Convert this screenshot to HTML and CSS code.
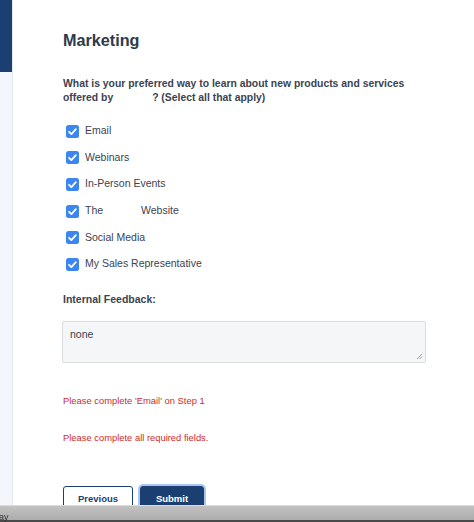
FILE: index.html
```html
<!DOCTYPE html>
<html>
<head>
<meta charset="utf-8">
<link rel="stylesheet" href="styles.css">
</head>
<body>
<div class="page">
  <aside class="sidebar">
    <div class="sidebar-top"></div>
    <div class="sidebar-rest"></div>
  </aside>
  <main class="main">
    <h1 class="title">Marketing</h1>
    <p class="question">What is your preferred way to learn about new products and services<br>offered by <span class="blank"></span>? (Select all that apply)</p>
    <ul class="options">
      <li class="option"><span class="check"><svg viewBox="0 0 14 14" width="13" height="13"><path d="M3.3 7.3 L5.8 9.8 L10.6 4.4" fill="none" stroke="#fff" stroke-width="1.9" stroke-linecap="round" stroke-linejoin="round"/></svg></span><span>Email</span></li>
      <li class="option"><span class="check"><svg viewBox="0 0 14 14" width="13" height="13"><path d="M3.3 7.3 L5.8 9.8 L10.6 4.4" fill="none" stroke="#fff" stroke-width="1.9" stroke-linecap="round" stroke-linejoin="round"/></svg></span><span>Webinars</span></li>
      <li class="option"><span class="check"><svg viewBox="0 0 14 14" width="13" height="13"><path d="M3.3 7.3 L5.8 9.8 L10.6 4.4" fill="none" stroke="#fff" stroke-width="1.9" stroke-linecap="round" stroke-linejoin="round"/></svg></span><span>In-Person Events</span></li>
      <li class="option"><span class="check"><svg viewBox="0 0 14 14" width="13" height="13"><path d="M3.3 7.3 L5.8 9.8 L10.6 4.4" fill="none" stroke="#fff" stroke-width="1.9" stroke-linecap="round" stroke-linejoin="round"/></svg></span><span>The <span class="blank wide"></span>Website</span></li>
      <li class="option"><span class="check"><svg viewBox="0 0 14 14" width="13" height="13"><path d="M3.3 7.3 L5.8 9.8 L10.6 4.4" fill="none" stroke="#fff" stroke-width="1.9" stroke-linecap="round" stroke-linejoin="round"/></svg></span><span>Social Media</span></li>
      <li class="option"><span class="check"><svg viewBox="0 0 14 14" width="13" height="13"><path d="M3.3 7.3 L5.8 9.8 L10.6 4.4" fill="none" stroke="#fff" stroke-width="1.9" stroke-linecap="round" stroke-linejoin="round"/></svg></span><span>My Sales Representative</span></li>
    </ul>
    <label class="field-label">Internal Feedback:</label>
    <div class="textarea">none<svg class="grip" viewBox="0 0 8 8" width="7" height="7"><path d="M1 7 L7 1 M4 7 L7 4" stroke="#8a8f96" stroke-width="0.9"/></svg></div>
    <p class="error first">Please complete 'Email' on Step 1</p>
    <p class="error second">Please complete all required fields.</p>
    <div class="buttons">
      <button class="btn btn-secondary">Previous</button>
      <button class="btn btn-primary">Submit</button>
    </div>
  </main>
</div>
<div class="taskbar"><span class="taskbar-text">lay</span></div>
</body>
</html>
```
FILE: styles.css
```css
html, body {
  margin: 0;
  padding: 0;
  background: #ffffff;
  height: 100%;
  overflow: hidden;
}
body {
  font-family: "Liberation Sans", Arial, sans-serif;
  color: #3b4350;
}
.page {
  display: flex;
  min-height: 522px;
}
.sidebar {
  width: 12px;
  display: flex;
  flex-direction: column;
  border-right: 1px solid #e3e7ee;
}
.sidebar-top {
  height: 72px;
  background: #1c3f72;
}
.sidebar-rest {
  flex: 1;
  background: #f3f6fa;
}
.main {
  flex: 1;
  padding: 29px 0 0 50px;
}
.title {
  margin: 0;
  font-size: 16.2px;
  font-weight: bold;
  color: #2e3a4b;
  line-height: 22px;
}
.question {
  margin: 26px 0 0;
  font-size: 10.4px;
  font-weight: bold;
  line-height: 13.5px;
  color: #3b4350;
  white-space: nowrap;
}
.blank {
  display: inline-block;
  width: 36px;
}
.blank.wide {
  width: 35px;
}
.options {
  list-style: none;
  margin: 19px 0 0;
  padding: 0;
  display: flex;
  flex-direction: column;
  gap: 12.2px;
}
.option {
  display: flex;
  align-items: flex-start;
  gap: 6px;
  font-size: 10.5px;
  line-height: 14px;
  color: #3b4350;
  padding-left: 3px;
}
.check {
  width: 13px;
  height: 13px;
  border-radius: 2.5px;
  background: #3b86f0;
  display: inline-flex;
  margin-top: 1.5px;
}
.field-label {
  display: block;
  margin-top: 22px;
  font-size: 10.5px;
  font-weight: bold;
  line-height: 13px;
  color: #3b4350;
}
.textarea {
  position: relative;
  margin-top: 15px;
  margin-left: -1px;
  width: 364px;
  height: 42px;
  box-sizing: border-box;
  border: 1px solid #d9dde2;
  border-radius: 2px;
  background: #f4f6f8;
  padding: 6.5px 7px;
  font-size: 10.5px;
  line-height: 13px;
  color: #3b4350;
}
.grip {
  position: absolute;
  right: 2px;
  bottom: 2px;
}
.error {
  margin: 0;
  font-size: 9.4px;
  line-height: 12px;
  color: #cf2b2b;
}
.error.first {
  margin-top: 32px;
}
.error.second {
  margin-top: 25px;
}
.buttons {
  display: flex;
  gap: 7px;
  margin-top: 42px;
}
.btn {
  font-family: "Liberation Sans", Arial, sans-serif;
  font-size: 9.5px;
  font-weight: bold;
  height: 25px;
  border-radius: 3px;
  padding: 0;
}
.btn-secondary {
  width: 70px;
  background: #ffffff;
  color: #1c3f72;
  border: 1px solid #1c3f72;
}
.btn-primary {
  width: 64px;
  background: #1c3f72;
  color: #ffffff;
  border: 1px solid #1c3f72;
  box-shadow: 0 0 0 2px #a9c6f2;
}
.taskbar {
  position: fixed;
  left: 0;
  right: 0;
  bottom: 0;
  height: 14px;
  background: linear-gradient(#c2c2c2, #acacac);
  border-top: 1px solid #dcdcdc;
  border-bottom: 2px solid #4a4a4a;
}
.taskbar-text {
  font-size: 9px;
  color: #333;
  line-height: 12px;
  margin-left: -3px;
  display: inline-block;
}
```
